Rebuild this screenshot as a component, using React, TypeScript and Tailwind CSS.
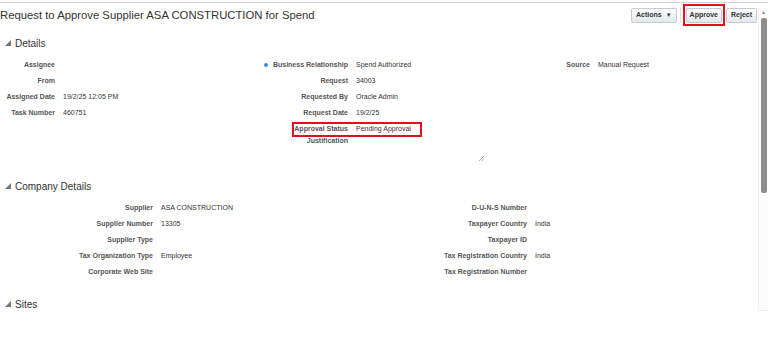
import React from "react"

const font = { fontFamily: '"Liberation Sans", Arial, sans-serif' }

function Tri() {
  return (
    <svg width="6" height="6" viewBox="0 0 6 6" className="shrink-0">
      <polygon points="6,0 6,6 0,6" fill="#777" />
    </svg>
  )
}

function SectionHeader({ title }: { title: string }) {
  return (
    <div className="flex items-center gap-[4px] pl-[5px] h-[16px] text-[10px] text-[#333]">
      <Tri />
      <span>{title}</span>
    </div>
  )
}

function Row({ label, value, lw, dot }: { label: string; value?: string; lw: number; dot?: boolean }) {
  return (
    <div className="flex items-center h-[16px] text-[7px]">
      <div className="flex items-center justify-end font-bold text-[#555] shrink-0 whitespace-nowrap" style={{ width: lw }}>
        {dot && <span className="w-[4px] h-[4px] rounded-full bg-[#3b8fd9] mr-[5px]" />}
        {label}
      </div>
      <div className="pl-[8px] text-[#333] whitespace-nowrap">{value}</div>
    </div>
  )
}

function Btn({ children, caret, tight }: { children: React.ReactNode; caret?: boolean; tight?: boolean }) {
  return (
    <button className={(tight ? "px-[3px] " : "px-[4px] ") + "h-[15px] flex items-center gap-[4px] rounded-[2px] border border-[#c3ccd5] bg-gradient-to-b from-[#fbfcfd] to-[#e3e8ec] text-[7px] font-bold text-[#333]"}>
      {children}
      {caret && <span className="text-[6px]">▼</span>}
    </button>
  )
}

export default function App() {
  return (
    <div className="w-[768px] h-[339px] bg-white overflow-hidden relative" style={font}>
      <div className="h-[3px] border-b border-[#d4d4d4]" />
      {/* header */}
      <div className="flex items-center h-[24px] pr-[11px]">
        <div className="flex-1 text-[11.3px] text-[#333] whitespace-nowrap">
          Request to Approve Supplier ASA CONSTRUCTION for Spend
        </div>
        <Btn caret>Actions</Btn>
        <div className="w-px h-[15px] bg-[#e2e2e2] ml-[3px] mr-[2px]" />
        <div className="border-2 border-[#e0101c] p-[1px] h-[22px] flex items-center">
          <Btn tight>Approve</Btn>
        </div>
        <div className="ml-[1px]">
          <Btn>Reject</Btn>
        </div>
      </div>

      {/* scrollbar */}
      <div className="absolute right-0 top-[8px] w-[10px] h-[303px] border-l border-b border-[#eee] bg-[#fcfcfc]">
        <div className="flex justify-center pt-[1px] text-[5px] text-[#888]">▲</div>
        <div className="mx-auto mt-[1px] w-[6px] h-[175px] rounded-[2px] bg-[#8d8d8d]" />
      </div>

      <div className="mt-[8px]">
        <SectionHeader title="Details" />
      </div>

      <div className="flex mt-[6px]">
        <div className="w-[262px]">
          <Row label="Assignee" lw={55} />
          <Row label="From" lw={55} />
          <Row label="Assigned Date" value="19/2/25 12:05 PM" lw={55} />
          <Row label="Task Number" value="460751" lw={55} />
        </div>
        <div className="w-[238px]">
          <Row label="Business Relationship" value="Spend Authorized" lw={86} dot />
          <Row label="Request" value="34003" lw={86} />
          <Row label="Requested By" value="Oracle Admin" lw={86} />
          <Row label="Request Date" value="19/2/25" lw={86} />
          <div className="relative">
            <Row label="Approval Status" value="Pending Approval" lw={86} />
            <div className="absolute left-[30px] top-[1px] w-[130px] h-[15px] border-2 border-[#e0101c]" />
          </div>
          <div className="flex h-[24px] text-[7px] -mt-[3px]">
            <div className="w-[86px] text-right font-bold text-[#555] pt-[2px]">Justification</div>
            <div className="w-[132px] ml-[8px] relative">
              <svg width="6" height="6" viewBox="0 0 6 6" className="absolute right-[4px] bottom-[-3px]">
                <line x1="1" y1="6" x2="6" y2="1" stroke="#999" strokeWidth="0.8" />
                <line x1="3.5" y1="6" x2="6" y2="3.5" stroke="#999" strokeWidth="0.8" />
              </svg>
            </div>
          </div>
        </div>
        <div>
          <Row label="Source" value="Manual Request" lw={90} />
        </div>
      </div>

      <div className="mt-[20px]">
        <SectionHeader title="Company Details" />
      </div>

      <div className="flex mt-[6px]">
        <div className="w-[384px]">
          <Row label="Supplier" value="ASA CONSTRUCTION" lw={153} />
          <Row label="Supplier Number" value="13305" lw={153} />
          <Row label="Supplier Type" lw={153} />
          <Row label="Tax Organization Type" value="Employee" lw={153} />
          <Row label="Corporate Web Site" lw={153} />
        </div>
        <div>
          <Row label="D-U-N-S Number" lw={143} />
          <Row label="Taxpayer Country" value="India" lw={143} />
          <Row label="Taxpayer ID" lw={143} />
          <Row label="Tax Registration Country" value="India" lw={143} />
          <Row label="Tax Registration Number" lw={143} />
        </div>
      </div>

      <div className="mt-[16px]">
        <SectionHeader title="Sites" />
      </div>
    </div>
  )
}
